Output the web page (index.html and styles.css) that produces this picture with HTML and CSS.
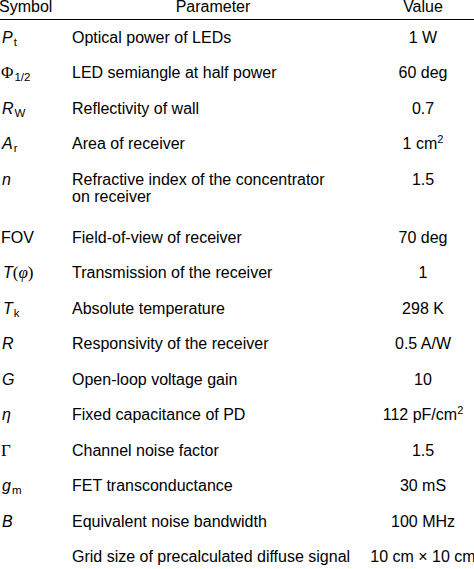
FILE: index.html
```html
<!DOCTYPE html>
<html>
<head>
<meta charset="utf-8">
<link rel="stylesheet" href="styles.css">
</head>
<body>
<div class="frame">
  <div class="table">
    <div class="row head">
      <div class="c sym">Symbol</div>
      <div class="c par hc">Parameter</div>
      <div class="c val">Value</div>
    </div>
    <div class="row">
      <div class="c sym"><i>P</i><sub>t</sub></div>
      <div class="c par">Optical power of LEDs</div>
      <div class="c val">1 W</div>
    </div>
    <div class="row">
      <div class="c sym"><span class="serif">Φ</span><sub>1/2</sub></div>
      <div class="c par">LED semiangle at half power</div>
      <div class="c val">60 deg</div>
    </div>
    <div class="row">
      <div class="c sym"><i>R</i><sub>W</sub></div>
      <div class="c par">Reflectivity of wall</div>
      <div class="c val">0.7</div>
    </div>
    <div class="row">
      <div class="c sym"><i>A</i><sub>r</sub></div>
      <div class="c par">Area of receiver</div>
      <div class="c val">1 cm<sup>2</sup></div>
    </div>
    <div class="row tall">
      <div class="c sym"><i>n</i></div>
      <div class="c par">Refractive index of the concentrator<br>on receiver</div>
      <div class="c val">1.5</div>
    </div>
    <div class="row">
      <div class="c sym">FOV</div>
      <div class="c par">Field-of-view of receiver</div>
      <div class="c val">70 deg</div>
    </div>
    <div class="row">
      <div class="c sym"><i class="ind">T</i><span class="serif">(<i>φ</i>)</span></div>
      <div class="c par">Transmission of the receiver</div>
      <div class="c val">1</div>
    </div>
    <div class="row">
      <div class="c sym"><i class="ind">T</i><sub>k</sub></div>
      <div class="c par">Absolute temperature</div>
      <div class="c val">298 K</div>
    </div>
    <div class="row">
      <div class="c sym"><i>R</i></div>
      <div class="c par">Responsivity of the receiver</div>
      <div class="c val">0.5 A/W</div>
    </div>
    <div class="row">
      <div class="c sym"><i>G</i></div>
      <div class="c par">Open-loop voltage gain</div>
      <div class="c val">10</div>
    </div>
    <div class="row">
      <div class="c sym"><i>η</i></div>
      <div class="c par">Fixed capacitance of PD</div>
      <div class="c val">112 pF/cm<sup>2</sup></div>
    </div>
    <div class="row">
      <div class="c sym"><span class="serif">Γ</span></div>
      <div class="c par">Channel noise factor</div>
      <div class="c val">1.5</div>
    </div>
    <div class="row">
      <div class="c sym"><i>g</i><sub>m</sub></div>
      <div class="c par">FET transconductance</div>
      <div class="c val">30 mS</div>
    </div>
    <div class="row">
      <div class="c sym"><i>B</i></div>
      <div class="c par">Equivalent noise bandwidth</div>
      <div class="c val">100 MHz</div>
    </div>
    <div class="row">
      <div class="c sym"></div>
      <div class="c par">Grid size of precalculated diffuse signal</div>
      <div class="c val">10 cm × 10 cm</div>
    </div>
  </div>
</div>
</body>
</html>
```

FILE: styles.css
```css
html, body {
  margin: 0;
  padding: 0;
  background: #ffffff;
  overflow: hidden;
}

.frame {
  width: 474px;
  height: 569px;
  overflow: hidden;
}

.table {
  width: 492px;
  font-family: "Liberation Sans", Arial, sans-serif;
  font-size: 16px;
  line-height: 17.5px;
  color: #000000;
}

.row {
  display: grid;
  grid-template-columns: 72px 282px 138px;
  padding: 9px 0;
}

.row.head {
  padding: 0 0 4.5px 0;
  line-height: 14px;
  border-bottom: 1.6px solid #000000;
}

.row.tall {
  padding-bottom: 14.3px;
}

.c {
  white-space: nowrap;
}

.sym {
  padding-left: 1px;
}

.head .sym {
  padding-left: 0;
  margin-left: -1px;
}

.par {
  text-align: left;
}

.par.hc {
  text-align: center;
}

.val {
  text-align: center;
}

.sym i {
  font-style: italic;
  padding-left: 1px;
}

.sym i.ind {
  padding-left: 2px;
}

.serif {
  font-family: "Liberation Serif", "Times New Roman", serif;
  font-size: 17px;
}

.serif i {
  padding-left: 0;
  font-style: italic;
}

sub {
  font-size: 11.5px;
  line-height: 0;
  vertical-align: -3px;
  margin-left: 1px;
}

sup {
  font-size: 11px;
  line-height: 0;
  vertical-align: 6px;
}
```
